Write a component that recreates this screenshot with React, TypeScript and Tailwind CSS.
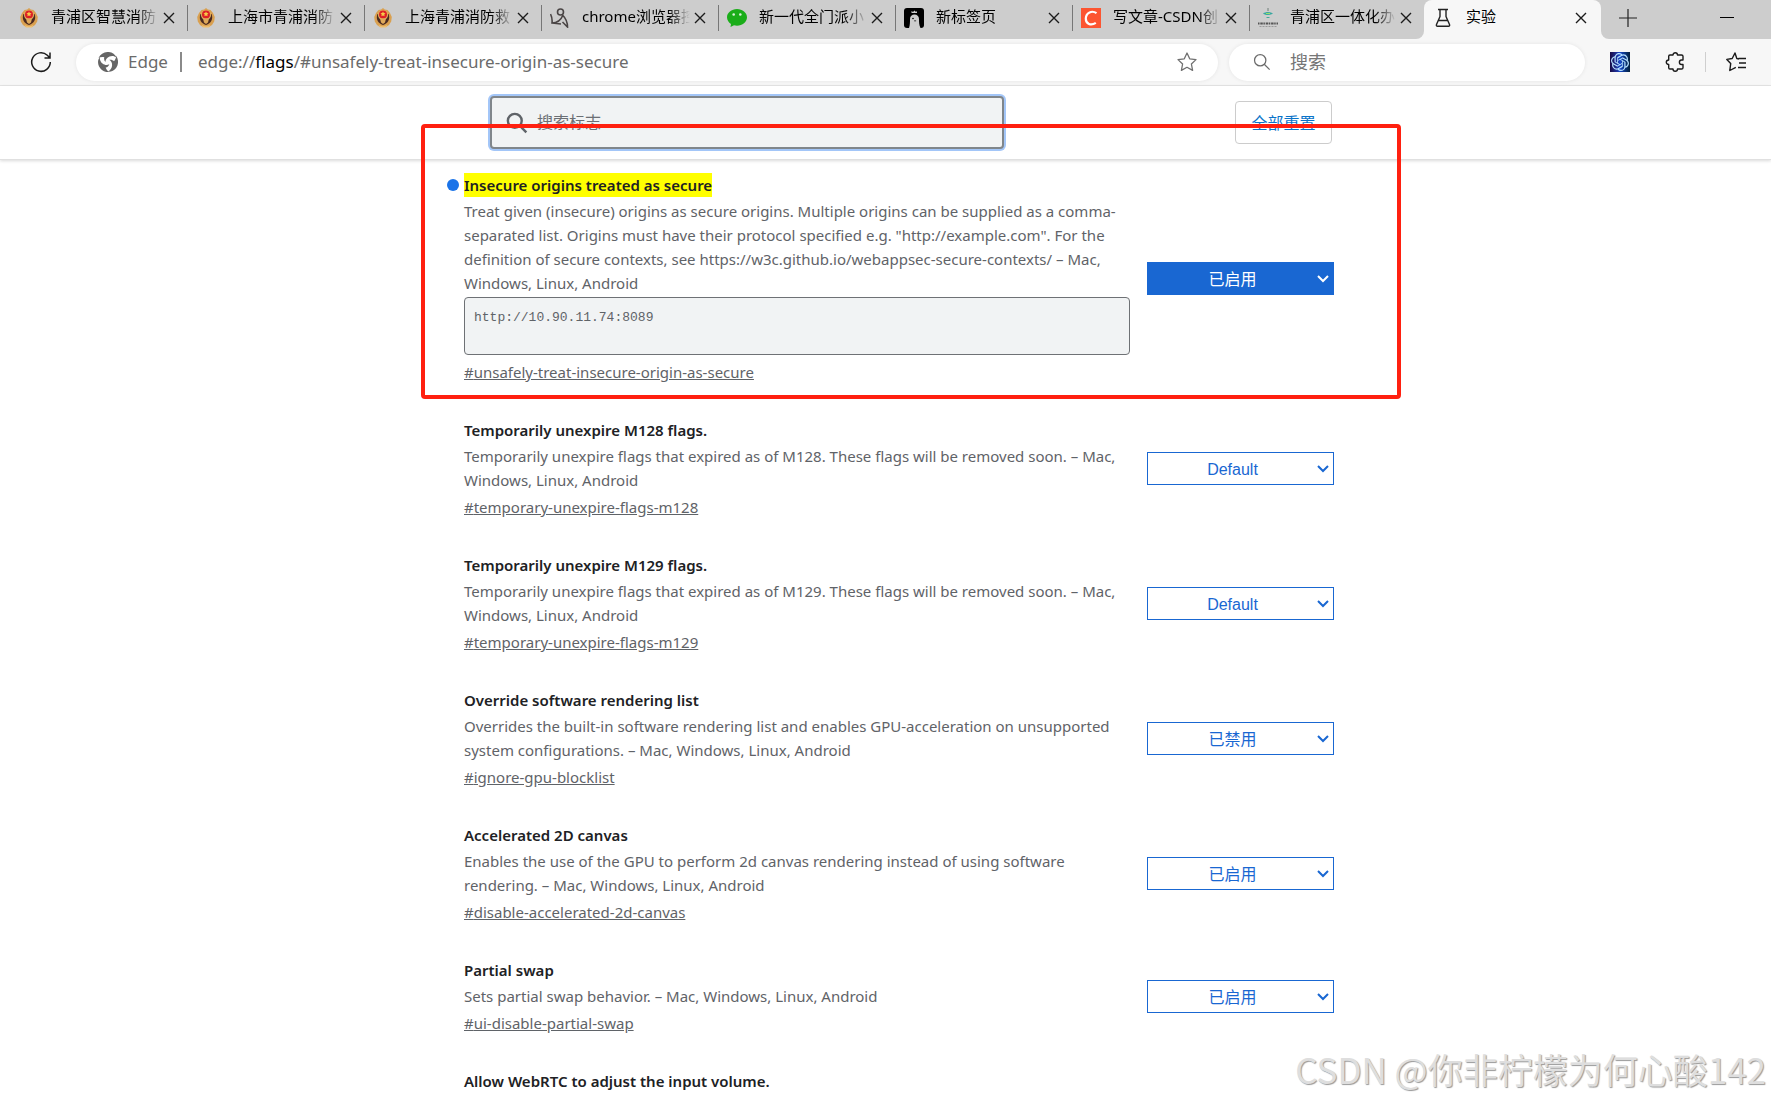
import { useState } from "react";
import type { ReactNode } from "react";
import { SiOpenai } from "react-icons/si";

type Flag = {
  id: string;
  title: string;
  lines: string[];
  value: string;
  origins?: string;
};

const flags: Flag[] = [
  {
    id: "unsafely-treat-insecure-origin-as-secure",
    title: "Insecure origins treated as secure",
    lines: [
      "Treat given (insecure) origins as secure origins. Multiple origins can be supplied as a comma-",
      "separated list. Origins must have their protocol specified e.g. \"http://example.com\". For the",
      "definition of secure contexts, see https://w3c.github.io/webappsec-secure-contexts/ – Mac,",
      "Windows, Linux, Android",
    ],
    value: "已启用",
    origins: "http://10.90.11.74:8089",
  },
  {
    id: "temporary-unexpire-flags-m128",
    title: "Temporarily unexpire M128 flags.",
    lines: [
      "Temporarily unexpire flags that expired as of M128. These flags will be removed soon. – Mac,",
      "Windows, Linux, Android",
    ],
    value: "Default",
  },
  {
    id: "temporary-unexpire-flags-m129",
    title: "Temporarily unexpire M129 flags.",
    lines: [
      "Temporarily unexpire flags that expired as of M129. These flags will be removed soon. – Mac,",
      "Windows, Linux, Android",
    ],
    value: "Default",
  },
  {
    id: "ignore-gpu-blocklist",
    title: "Override software rendering list",
    lines: [
      "Overrides the built-in software rendering list and enables GPU-acceleration on unsupported",
      "system configurations. – Mac, Windows, Linux, Android",
    ],
    value: "已禁用",
  },
  {
    id: "disable-accelerated-2d-canvas",
    title: "Accelerated 2D canvas",
    lines: [
      "Enables the use of the GPU to perform 2d canvas rendering instead of using software",
      "rendering. – Mac, Windows, Linux, Android",
    ],
    value: "已启用",
  },
  {
    id: "ui-disable-partial-swap",
    title: "Partial swap",
    lines: ["Sets partial swap behavior. – Mac, Windows, Linux, Android"],
    value: "已启用",
  },
];

// ---------------- ICONS ----------------
const Emblem = () => (
  <svg viewBox="0 0 20 20" className="h-5 w-5">
    <path d="M10 0l1.800 1.500L14.500 2l2.500 3 1.800 4-.6 4.500L16 17l-3 2H7l-3-2-2.200-3.500L1.200 9 3 5l2.500-3 2.700-.5z" fill="#d9a050" />
    <path d="M4.500 6C2.500 11 5 15.500 10 17c5-1.500 7.500-6 5.500-11" fill="#4a2a22" />
    <circle cx="10" cy="7" r="5" fill="#e8b25c" />
    <circle cx="10" cy="6.600" r="4" fill="#dc1f26" />
    <path d="M10 3.500l.8 1.600 1.700.2-1.200 1.200.3 1.700-1.600-.8-1.600.8.3-1.700-1.200-1.200 1.700-.2z" fill="#f7c948" />
    <path d="M7 10.500h6l-1 4-2 1.500-2-1.500z" fill="#dfa95a" />
    <path d="M5.500 17c3 1.500 6 1.500 9 0l-1.500 2.500H7z" fill="#efbf70" />
  </svg>
);

const Stroke = () => (
  <svg viewBox="0 0 20 20" className="h-5 w-5" fill="none" stroke="#4a4545" strokeWidth="1.600">
    <circle cx="10.500" cy="4" r="3" />
    <path d="M.5 6c1 2 2 5 1.500 9 5 0 9-3 11-8M2 15l9 1M12.500 7c3 3 5 7 5 12l-5-5" />
  </svg>
);

const Wechat = () => (
  <svg viewBox="0 0 20 20" className="h-5 w-5">
    <path d="M10 1c5.500 0 10 3.700 10 8.300s-4.500 8.400-10 8.400c-1 0-2-.1-3-.4L3.500 19l.5-3C1.600 14.500 0 12 0 9.300 0 4.700 4.500 1 10 1z" fill="#1aad19" />
    <circle cx="6.700" cy="6.500" r="1.300" fill="#d9f2d9" />
    <circle cx="13.300" cy="6.500" r="1.300" fill="#d9f2d9" />
  </svg>
);

const Penguin = () => (
  <svg viewBox="0 0 20 20" className="h-5 w-5">
    <rect width="20" height="20" rx="3" fill="#000" />
    <path d="M5 20c1-3 1-6 1-9 0-3 2-4.500 4.500-4.500S15 8 15 11c0 3 0 6 1.500 9z" fill="#cdcdcd" />
    <path d="M7.500 5V3l1.500 1 1.500-1.500L12 4l1-1v2z" fill="#cdcdcd" />
    <circle cx="9" cy="10.500" r=".8" fill="#000" />
    <path d="M10.500 12l2 1-2 .6z" fill="#000" />
  </svg>
);

const CsdnIcon = () => (
  <svg viewBox="0 0 20 20" className="h-5 w-5">
    <rect width="20" height="20" fill="#fc5531" />
    <path d="M15.500 5.200C11 2 5 4.500 4.800 10.500 4.700 16 10 18 14.800 14.800" fill="none" stroke="#fff" strokeWidth="2.200" />
  </svg>
);

const Integrated = () => (
  <svg viewBox="0 0 20 20" className="h-5 w-5">
    <path d="M10 0v3" stroke="#6f7f79" />
    <path d="M5 5.500c3-2 7-2 10 0-3 2-7 2-10 0z" fill="#3aa8a0" />
    <path d="M8 5.500h4" stroke="#9be06a" />
    <path d="M8.500 9.500h3" stroke="#4a9" />
    <path d="M0 15.500h20" stroke="#555" strokeWidth="2" strokeDasharray="1.500 .8 2.500 .6" />
    <path d="M1.500 18.500h17" stroke="#999" strokeDasharray="2 1" />
  </svg>
);

const Flask = () => (
  <svg viewBox="0 0 20 20" className="h-5 w-5" fill="none" stroke="#222" strokeWidth="1.400" strokeLinejoin="round">
    <path d="M4 1.500h10M6 1.500v7L2.500 16.500c-.4 1 0 1.800 1 1.800h11c1 0 1.400-.8 1-1.800L12 8.500v-7M4.500 12.500h9" />
  </svg>
);

const Cross = () => (
  <svg viewBox="0 0 12 12" className="h-3 w-3" stroke="#1b1b1b" strokeWidth="1.400">
    <path d="M1 1l10 10M11 1L1 11" />
  </svg>
);

const Lens = ({ className, width }: { className: string; width: string }) => (
  <svg viewBox="0 0 20 20" className={className} fill="none" stroke="currentColor" strokeWidth={width}>
    <circle cx="8" cy="8" r="6.300" />
    <path d="M12.500 12.500l6 6" />
  </svg>
);

// three blades turned round a light centre
const EdgeMark = () => (
  <svg viewBox="0 0 20 20" className="h-5 w-5" fill="#666">
    {[0, 120, 240].map((deg) => (
      <path
        key={deg}
        transform={`rotate(${deg} 10 10)`}
        d="M.5 6C2.500 2 6.500-.3 10.800 0c3.700.4 6.500 2.500 7.700 5.500-2-1.600-4.700-2-7-1C9 5.500 7.500 7.500 7.400 10 6.200 8.600 5.800 7 6.300 5.200 4.300 4.700 2.200 5 .5 6z"
      />
    ))}
  </svg>
);

const Star = () => (
  <svg viewBox="0 0 20 20" className="h-5 w-5" fill="none" stroke="#707070" strokeWidth="1.300" strokeLinejoin="round">
    <path d="M10 1l2.700 5.800 6.300.8-4.600 4.400 1.200 6.400L10 15.300l-5.600 3.100L5.600 12 1 7.600l6.300-.8z" />
  </svg>
);

const Puzzle = () => (
  <svg viewBox="0 0 20 20" className="h-5 w-5" fill="none" stroke="#1b1b1b" strokeWidth="1.400" strokeLinejoin="round">
    <path d="M8 3c0-3 4.500-3 4.500 0h4c.8 0 1.500.5 1.500 1.300V8h-1.500c-2.800 0-2.800 4.500 0 4.500H18v3.200c0 .8-.7 1.300-1.500 1.300h-4c0 3-4.500 3-4.500 0H5c-.8 0-1.300-.5-1.300-1.300V12.500C.5 12.500.5 8 3.700 8V4.300C3.700 3.500 4.200 3 5 3z" />
  </svg>
);

const Favorites = () => (
  <svg viewBox="0 0 20 20" className="h-5 w-5" fill="none" stroke="#1b1b1b" strokeWidth="1.400" strokeLinejoin="round">
    <path d="M13 7L10.800 6.500 9 1 6.200 6.500.8 7.400l3.900 4.200-.9 6.900 6-3.200M12.500 6.500H20M13 11h7M12 15.500h8" />
  </svg>
);

const tabs: { label: string; icon: ReactNode }[] = [
  { label: "青浦区智慧消防", icon: <Emblem /> },
  { label: "上海市青浦消防", icon: <Emblem /> },
  { label: "上海青浦消防救", icon: <Emblem /> },
  { label: "chrome浏览器控", icon: <Stroke /> },
  { label: "新一代全门派小", icon: <Wechat /> },
  { label: "新标签页", icon: <Penguin /> },
  { label: "写文章-CSDN创", icon: <CsdnIcon /> },
  { label: "青浦区一体化办", icon: <Integrated /> },
];

// ---------------- BROWSER CHROME ----------------
function TabStrip() {
  return (
    <div className="flex h-[39px] bg-[#cdcdcd] pl-[11px] text-[15px]">
      {tabs.map((tab, i) => {
        const last = i === tabs.length - 1;
        return (
          <div key={tab.label} className={`flex h-9 min-w-0 flex-1 items-center ${last ? "max-w-[166px]" : "max-w-[177px]"}`}>
            <button className="flex h-9 min-w-0 flex-1 items-center gap-3 pl-2">
              <span className="shrink-0">{tab.icon}</span>
              <span className="min-w-0 flex-1 overflow-hidden whitespace-nowrap pb-[3px] text-left text-black [mask-image:linear-gradient(to_right,black_80%,transparent)]">
                {tab.label}
              </span>
            </button>
            <button aria-label="关闭标签页" className={last ? "pl-1 pr-1" : "pl-1 pr-3"}>
              <Cross />
            </button>
            {!last && <span className="h-[26px] w-px bg-[#777]" />}
          </div>
        );
      })}
      <div className="flex bg-[#f7f7f7]">
        <span className="w-2 rounded-br-xl bg-[#cdcdcd]" />
      </div>
      <div className="flex w-[177px] shrink-0 rounded-t-lg bg-[#f7f7f7]">
        <button className="flex h-9 flex-1 items-center gap-3 pl-[10px]">
          <Flask />
          <span className="pb-[3px]">实验</span>
        </button>
        <button aria-label="关闭标签页" className="h-9 pr-[14px]">
          <Cross />
        </button>
      </div>
      <div className="flex bg-[#f7f7f7]">
        <span className="w-2 rounded-bl-xl bg-[#cdcdcd]" />
      </div>
      <button aria-label="新建标签页" className="h-9 px-[9px]">
        <svg viewBox="0 0 20 20" className="h-5 w-5" stroke="#222" strokeWidth="1.200">
          <path d="M1 10h18M10 1v18" />
        </svg>
      </button>
      <button aria-label="最小化" className="ml-auto h-9 pr-[37px]">
        <svg viewBox="0 0 14 14" className="h-[14px] w-[14px]" stroke="#000">
          <path d="M0 6.500h14" />
        </svg>
      </button>
    </div>
  );
}

function Toolbar() {
  return (
    <div className="flex h-[47px] items-center border-b border-[#e6e6e6] bg-[#f7f7f7] text-[#6b6b6b]">
      <button aria-label="刷新" className="ml-[30px] mr-6">
        <svg viewBox="0 0 22 22" className="h-[22px] w-[22px]" fill="none" stroke="#1b1b1b" strokeWidth="1.500">
          <path d="M20.300 11a9.300 9.300 0 1 1-3-6.800l2.200 2.300M20 1.500v5.500h-5.500" />
        </svg>
      </button>
      <div className="flex h-[37px] flex-1 items-center rounded-full bg-white pl-[22px] pr-[21px] shadow-[0_0_4px_rgba(0,0,0,0.08)]">
        <EdgeMark />
        <span className="ml-[10px] text-[17px]">Edge</span>
        <span className="mx-3 h-5 w-[2px] bg-[#8a8a8a]" />
        <span className="flex-1 pl-1 text-[17px]">
          edge://<span className="text-black">flags</span>/#unsafely-treat-insecure-origin-as-secure
        </span>
        <button aria-label="收藏">
          <Star />
        </button>
      </div>
      <label className="ml-[11px] flex h-[37px] w-[356px] items-center rounded-full bg-white pl-6 shadow-[0_0_4px_rgba(0,0,0,0.08)]">
        <Lens className="h-[18px] w-[18px]" width="1.4" />
        <input aria-label="搜索" placeholder="搜索" className="ml-[19px] w-[250px] text-[18px] outline-none placeholder:text-[#767676]" />
      </label>
      <button aria-label="助手" className="ml-[25px] flex h-5 w-5 items-center justify-center bg-linear-to-r from-[#170a45] via-[#1546c8] to-[#05203c] text-[#b5e0ff]">
        <SiOpenai className="h-[18px] w-[18px]" />
      </button>
      <button aria-label="扩展" className="ml-[35px]">
        <Puzzle />
      </button>
      <span className="ml-5 h-5 w-px bg-[#cfcfcf]" />
      <button aria-label="收藏夹" className="ml-5 mr-[25px]">
        <Favorites />
      </button>
    </div>
  );
}

// ---------------- FLAG ROW ----------------
function FlagRow({ flag }: { flag: Flag }) {
  const [value, setValue] = useState(flag.value);
  const [origins, setOrigins] = useState(flag.origins ?? "");
  const changed = flag.origins !== undefined;

  return (
    <section className="relative flex items-center justify-between">
      {changed && <span className="absolute top-[6px] -left-[17px] h-3 w-3 rounded-full bg-[#1a73e8]" />}
      <div className="w-[666px]">
        <h3 className="mb-[2px] h-6 text-[15px] font-semibold leading-6 text-[#202124]">
          <span className={changed ? "inline-block bg-[#ffff00]" : ""}>{flag.title}</span>
        </h3>
        <p className="whitespace-nowrap text-[15px] leading-6 text-[#5f6368]">
          {flag.lines.map((line) => (
            <span key={line} className="block">
              {line}
            </span>
          ))}
        </p>
        {changed && (
          <textarea
            aria-label={flag.title}
            value={origins}
            onChange={(e) => setOrigins(e.target.value)}
            className="mb-[5px] mt-[2px] block h-[58px] w-full resize-none rounded border border-[#6e7175] bg-[#f1f3f4] px-[9px] pt-[10px] font-['Liberation_Mono','Noto_Sans_CJK_SC',monospace] text-[13px] leading-5 text-[#5f6368] outline-none"
          />
        )}
        <a href={`#${flag.id}`} className="mt-[3px] block w-fit text-[15px] leading-6 text-[#5f6368] underline">
          #{flag.id}
        </a>
      </div>
      <div className="relative w-[187px]">
        <select
          aria-label={flag.title}
          value={value}
          onChange={(e) => setValue(e.target.value)}
          className={`block h-[33px] w-full appearance-none border border-[#1967d2] pt-[2px] pr-4 font-['Liberation_Sans','Noto_Sans_CJK_SC',sans-serif] text-[16px] outline-none [text-align-last:center] ${
            changed ? "bg-[#1967d2] text-white" : "bg-white text-[#1967d2]"
          }`}
        >
          <option>Default</option>
          <option>已启用</option>
          <option>已禁用</option>
        </select>
        <svg
          viewBox="0 0 12 8"
          className={`pointer-events-none absolute top-[13px] right-[5px] h-2 w-3 ${changed ? "text-white" : "text-[#1967d2]"}`}
          fill="none"
          stroke="currentColor"
          strokeWidth="2"
        >
          <path d="M1 1l5 5 5-5" />
        </svg>
      </div>
    </section>
  );
}

export default function App() {
  const [query, setQuery] = useState("");

  return (
    <div className="relative h-screen overflow-hidden bg-white font-['Noto_Sans','Noto_Sans_CJK_SC',sans-serif]">
      <TabStrip />
      <Toolbar />

      <header className="border-b border-[#e0e0e0] pl-[27px] shadow-[0_1px_3px_rgba(0,0,0,0.15)]">
        <div className="mx-auto flex h-[73px] max-w-[870px] items-center justify-between pl-[26px] pr-[2px]">
          <label className="flex h-[53px] w-[514px] items-center rounded border-2 border-[#80868b] bg-[#f1f3f4] pl-[14px] text-[#5f6368] ring-2 ring-[#a3c6f8]">
            <Lens className="h-[22px] w-[22px]" width="2.2" />
            <input
              aria-label="搜索标志"
              value={query}
              onChange={(e) => setQuery(e.target.value)}
              placeholder="搜索标志"
              className="ml-[9px] flex-1 pb-[2px] text-[16px] outline-none placeholder:text-[#6b6f74]"
            />
          </label>
          <button className="h-[43px] w-[97px] rounded border border-[#ccc] text-[16px] text-[#0b74c9]">全部重置</button>
        </div>
      </header>

      <main className="pl-[27px] pt-[13px]">
        <div className="mx-auto flex max-w-[870px] flex-col gap-[34px]">
          {flags.map((flag) => (
            <FlagRow key={flag.id} flag={flag} />
          ))}
          <h3 className="text-[15px] font-semibold leading-6 text-[#202124]">Allow WebRTC to adjust the input volume.</h3>
        </div>
      </main>

      {/* red marker over the first flag */}
      <div className="pointer-events-none absolute top-[124px] left-[calc(50%-465px)] h-[275px] w-[980px] rounded border-4 border-[#ff2010]" />

      <p className="pointer-events-none absolute right-[5px] bottom-2 text-[35px] leading-[50px] text-[#dedede] [text-shadow:1px_1px_1px_#999] font-['Noto_Sans_CJK_SC',sans-serif]">
        CSDN @你非柠檬为何心酸142
      </p>
    </div>
  );
}
